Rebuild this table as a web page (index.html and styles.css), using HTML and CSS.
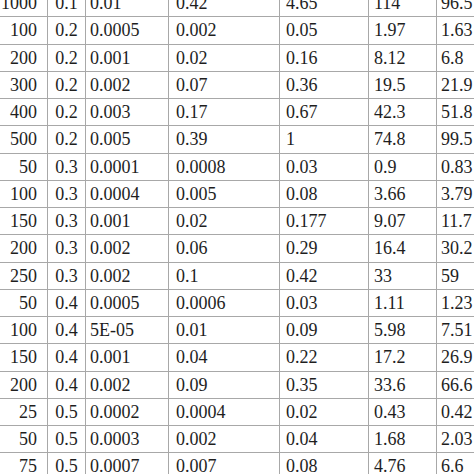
FILE: index.html
```html
<!DOCTYPE html>
<html>
<head>
<meta charset="utf-8">
<link rel="stylesheet" href="styles.css">
</head>
<body>
<table class="data">
<colgroup>
<col class="c1"><col class="c2"><col class="c3"><col class="c4"><col class="c5"><col class="c6"><col class="c7">
</colgroup>
<tbody>
<tr><td>1000</td><td>0.1</td><td>0.01</td><td>0.42</td><td>4.65</td><td>114</td><td>96.5</td></tr>
<tr><td>100</td><td>0.2</td><td>0.0005</td><td>0.002</td><td>0.05</td><td>1.97</td><td>1.63</td></tr>
<tr><td>200</td><td>0.2</td><td>0.001</td><td>0.02</td><td>0.16</td><td>8.12</td><td>6.8</td></tr>
<tr><td>300</td><td>0.2</td><td>0.002</td><td>0.07</td><td>0.36</td><td>19.5</td><td>21.9</td></tr>
<tr><td>400</td><td>0.2</td><td>0.003</td><td>0.17</td><td>0.67</td><td>42.3</td><td>51.8</td></tr>
<tr><td>500</td><td>0.2</td><td>0.005</td><td>0.39</td><td>1</td><td>74.8</td><td>99.5</td></tr>
<tr><td>50</td><td>0.3</td><td>0.0001</td><td>0.0008</td><td>0.03</td><td>0.9</td><td>0.83</td></tr>
<tr><td>100</td><td>0.3</td><td>0.0004</td><td>0.005</td><td>0.08</td><td>3.66</td><td>3.79</td></tr>
<tr><td>150</td><td>0.3</td><td>0.001</td><td>0.02</td><td>0.177</td><td>9.07</td><td>11.7</td></tr>
<tr><td>200</td><td>0.3</td><td>0.002</td><td>0.06</td><td>0.29</td><td>16.4</td><td>30.2</td></tr>
<tr><td>250</td><td>0.3</td><td>0.002</td><td>0.1</td><td>0.42</td><td>33</td><td>59</td></tr>
<tr><td>50</td><td>0.4</td><td>0.0005</td><td>0.0006</td><td>0.03</td><td>1.11</td><td>1.23</td></tr>
<tr><td>100</td><td>0.4</td><td>5E-05</td><td>0.01</td><td>0.09</td><td>5.98</td><td>7.51</td></tr>
<tr><td>150</td><td>0.4</td><td>0.001</td><td>0.04</td><td>0.22</td><td>17.2</td><td>26.9</td></tr>
<tr><td>200</td><td>0.4</td><td>0.002</td><td>0.09</td><td>0.35</td><td>33.6</td><td>66.6</td></tr>
<tr><td>25</td><td>0.5</td><td>0.0002</td><td>0.0004</td><td>0.02</td><td>0.43</td><td>0.42</td></tr>
<tr><td>50</td><td>0.5</td><td>0.0003</td><td>0.002</td><td>0.04</td><td>1.68</td><td>2.03</td></tr>
<tr><td>75</td><td>0.5</td><td>0.0007</td><td>0.007</td><td>0.08</td><td>4.76</td><td>6.6</td></tr>
</tbody>
</table>
</body>
</html>
```

FILE: styles.css
```css
html, body {
  margin: 0;
  padding: 0;
  background: #ffffff;
  overflow: hidden;
}

.data {
  border-collapse: collapse;
  table-layout: fixed;
  width: 573px;
  margin-top: -11px;
  margin-left: -13px;
  font-family: "Liberation Serif", "Times New Roman", serif;
  font-size: 18px;
  color: #1e1e1e;
}

.c1 { width: 60px; }
.c2 { width: 38px; }
.c3 { width: 83px; }
.c4 { width: 111px; }
.c5 { width: 89px; }
.c6 { width: 68px; }
.c7 { width: 124px; }

.data td {
  border: 1px solid #a8a8a8;
  height: 26.25px;
  padding: 0;
  line-height: 20px;
  white-space: nowrap;
  vertical-align: middle;
  text-align: left;
}

.data td:nth-child(1) { text-align: right; padding-right: 10px; }
.data td:nth-child(2) { text-align: center; }
.data td:nth-child(3) { padding-left: 4px; }
.data td:nth-child(4) { padding-left: 7px; }
.data td:nth-child(5) { padding-left: 6px; }
.data td:nth-child(6) { padding-left: 5px; }
.data td:nth-child(7) { padding-left: 4px; }
```
